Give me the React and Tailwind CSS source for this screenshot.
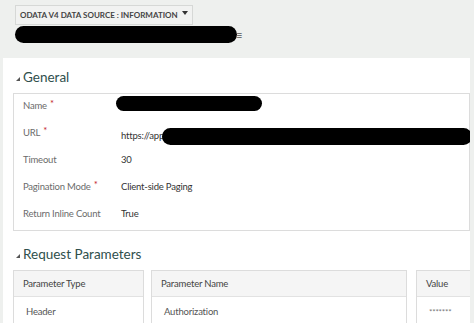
const FONT = { fontFamily: 'Lato, "Open Sans", sans-serif' };

const fields = [
  { label: 'Name', required: true, redact: 'name' },
  { label: 'URL', required: true, value: 'https://app', redact: 'url' },
  { label: 'Timeout', value: '30' },
  { label: 'Pagination Mode', required: true, value: 'Client-side Paging' },
  { label: 'Return Inline Count', value: 'True' },
];

const Caret = () => (
  <svg width="4" height="4" viewBox="0 0 4 4" className="shrink-0 mt-[3px]">
    <polygon points="0,4 4,4 4,0" fill="#555" />
  </svg>
);

function SectionTitle({ children }) {
  return (
    <div className="flex items-center gap-[3px] pl-[3px]">
      <Caret />
      <span className="text-[13.5px] leading-[20px] text-[#2f4f4c]">{children}</span>
    </div>
  );
}

function FieldRow({ label, required, value, redact }) {
  return (
    <div className="flex items-start h-[27px] pt-[5px]">
      <div className="w-[107px] shrink-0 pl-[9px] text-[9.5px] leading-[14px] tracking-[-0.2px] text-[#6b6b6b] whitespace-nowrap">
        {label}
        {required && <span className="text-[#c4262e] ml-[3px] relative -top-[2px]">*</span>}
      </div>
      <div className="flex items-center text-[9.5px] leading-[14px] tracking-[-0.2px] text-[#333] whitespace-nowrap">
        {redact === 'name' && <span className="-ml-[5px] -mt-[3px] block w-[146px] h-[15px] rounded-full bg-black" />}
        {value && <span>{value}</span>}
        {redact === 'url' && <span className="-ml-[2px] mt-[2px] block w-[310px] h-[17px] rounded-full bg-black" />}
      </div>
    </div>
  );
}

export default function App() {
  return (
    <div className="w-[474px] h-[323px] bg-[#eef0ee] overflow-hidden flex flex-col" style={FONT}>
      <div className="h-[58px] shrink-0 pl-[15px] pt-[5px] flex flex-col items-start">
        <div className="flex items-center gap-[4px] h-[20px] px-[4px] border border-[#d6d8d6] bg-[#f1f2f1] text-[8px] leading-[10px] font-bold text-[#444]">
          ODATA V4 DATA SOURCE : INFORMATION
          <svg width="6" height="4" viewBox="0 0 6 4" className="-mt-[4px]">
            <polygon points="0,0 6,0 3,4" fill="#333" />
          </svg>
        </div>
        <div className="flex items-center mt-[1px]">
          <span className="block w-[222px] h-[17px] rounded-full bg-black" />
          <span className="text-[11px] leading-[11px] text-[#555] -ml-[1px]">≡</span>
        </div>
      </div>

      <div className="flex-1 ml-[3px] mr-[4px] bg-white pl-[10px] overflow-hidden">
        <div className="pt-[9px] pb-[6px]">
          <SectionTitle>General</SectionTitle>
        </div>
        <div className="border border-[#dcdcdc] pb-[1px]">
          {fields.map((f) => (
            <FieldRow key={f.label} {...f} />
          ))}
        </div>

        <div className="pt-[13px] pb-[6px]">
          <SectionTitle>Request Parameters</SectionTitle>
        </div>
        <div className="flex gap-[7px] text-[9.5px] leading-[14px] tracking-[-0.2px]">
          <div className="w-[131px] shrink-0 border border-[#dcdcdc]">
            <div className="h-[26px] flex items-center px-[9px] bg-[#f5f5f5] border-b border-[#e2e2e2] text-[#444]">Parameter Type</div>
            <div className="h-[30px] flex items-center px-[12px] text-[#555]">Header</div>
          </div>
          <div className="w-[256px] shrink-0 border border-[#dcdcdc]">
            <div className="h-[26px] flex items-center px-[9px] bg-[#f5f5f5] border-b border-[#e2e2e2] text-[#444]">Parameter Name</div>
            <div className="h-[30px] flex items-center px-[12px] text-[#555]">Authorization</div>
          </div>
          <div className="w-[70px] shrink-0 ml-[2px] border border-[#dcdcdc]">
            <div className="h-[26px] flex items-center px-[9px] bg-[#f5f5f5] border-b border-[#e2e2e2] text-[#444]">Value</div>
            <div className="h-[30px] flex items-center px-[12px] text-[#777] text-[8px]">*******</div>
          </div>
        </div>
      </div>
    </div>
  );
}
